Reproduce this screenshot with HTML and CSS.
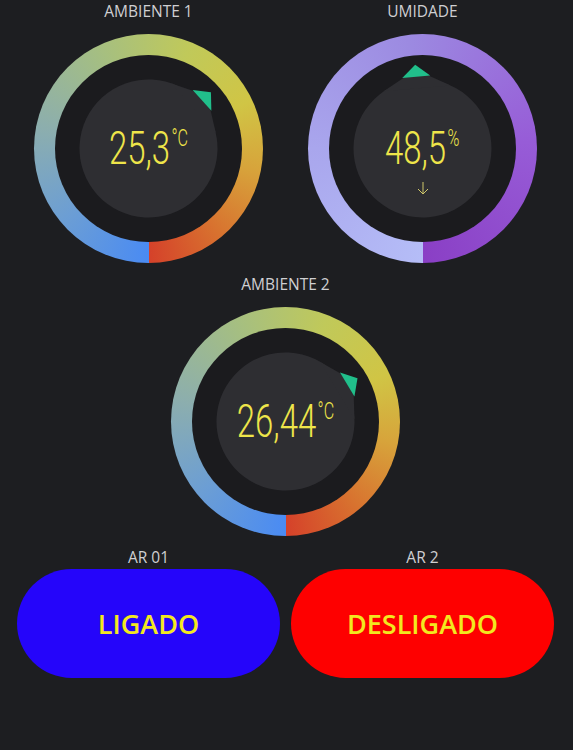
FILE: index.html
```html
<!DOCTYPE html>
<html lang="pt">
<head>
    <meta charset="utf-8">
    <meta name="viewport" content="width=device-width, initial-scale=1">
    <title>Painel</title>
    <link rel="stylesheet" href="styles.css">
</head>
<body>
    <main class="painel">
        <section class="linha duas">
            <div class="widget">
                <p class="rotulo">AMBIENTE 1</p>
                <div class="anel anel-temp">
                    <div class="poco">
                        <svg class="botao" viewBox="-93.5 -93.5 187 187">
                            <g transform="rotate(48)">
                                <circle r="69" />
                                <polygon class="corpo" points="0,-79 33.6,-60.3 -33.6,-60.3" />
                                <polygon class="seta" points="0,-84 14,-72 -14,-72" />
                            </g>
                        </svg>
                        <div class="leitura"><span class="valor">25,3</span><span class="unidade">°C</span></div>
                    </div>
                </div>
            </div>
            <div class="widget">
                <p class="rotulo">UMIDADE</p>
                <div class="anel anel-umid">
                    <div class="poco">
                        <svg class="botao" viewBox="-93.5 -93.5 187 187">
                            <g transform="rotate(-5)">
                                <circle r="69" />
                                <polygon class="corpo" points="0,-79 33.6,-60.3 -33.6,-60.3" />
                                <polygon class="seta" points="0,-84 14,-72 -14,-72" />
                            </g>
                        </svg>
                        <div class="leitura"><span class="valor">48,5</span><span class="unidade">%</span></div>
                        <svg class="tendencia" viewBox="0 0 12 13">
                            <path d="M6 0 V12 M1 7 L6 12 L11 7" />
                        </svg>
                    </div>
                </div>
            </div>
        </section>

        <section class="linha">
            <div class="widget">
                <p class="rotulo separado">AMBIENTE 2</p>
                <div class="anel anel-temp">
                    <div class="poco">
                        <svg class="botao" viewBox="-93.5 -93.5 187 187">
                            <g transform="rotate(59)">
                                <circle r="69" />
                                <polygon class="corpo" points="0,-79 33.6,-60.3 -33.6,-60.3" />
                                <polygon class="seta" points="0,-84 14,-72 -14,-72" />
                            </g>
                        </svg>
                        <div class="leitura"><span class="valor">26,44</span><span class="unidade">°C</span></div>
                    </div>
                </div>
            </div>
        </section>

        <section class="linha duas">
            <div class="widget">
                <p class="rotulo separado colado">AR 01</p>
                <button class="interruptor ligado">LIGADO</button>
            </div>
            <div class="widget">
                <p class="rotulo separado colado">AR 2</p>
                <button class="interruptor desligado">DESLIGADO</button>
            </div>
        </section>
    </main>
</body>
</html>
```

FILE: styles.css
```css
* { margin: 0; padding: 0; box-sizing: border-box; }
body {
    background: #1d1e21;
    font-family: "Open Sans", sans-serif;
}
.painel { padding: 0 19px 0 17px; }
.duas {
    display: grid;
    grid-template-columns: 1fr 1fr;
    column-gap: 11px;
}
.widget {
    display: flex;
    flex-direction: column;
    align-items: center;
}
.rotulo {
    font-size: 15.5px;
    line-height: 22px;
    color: #cfcfd2;
    margin-bottom: 12px;
}
.separado { margin-top: 10px; }
.colado { margin-bottom: 1px; }

.anel {
    width: 229px;
    height: 229px;
    border-radius: 50%;
    display: flex;
    align-items: center;
    justify-content: center;
}
.anel-temp {
    background: conic-gradient(from 180deg, #4a8bf3, #6c9ed4 14%, #8caeae 28%, #a6bf80 43%, #c0c95a 56%, #d0c545 68%, #d7a43b 78%, #d8722f 89%, #d5412a);
}
.anel-umid {
    background: conic-gradient(from 180deg, #b5bdf7, #a9a6ed 25%, #9c8ae1 48%, #975cd7 74%, #8a3fc5);
}
.poco {
    width: 187px;
    height: 187px;
    border-radius: 50%;
    background: #1b1b1e;
    position: relative;
    display: flex;
    align-items: center;
    justify-content: center;
}
.botao {
    position: absolute;
    inset: 0;
    width: 100%;
    height: 100%;
}
.botao circle, .botao .corpo { fill: #2e2e32; }
.botao .seta { fill: #21bf8b; }

.leitura {
    position: relative;
    display: flex;
    align-items: flex-start;
    color: #eee54a;
    font-family: Roboto, sans-serif;
    font-weight: 300;
    transform: translateY(-1px) scaleX(0.7);
}
.valor { font-size: 47px; line-height: 1; }
.unidade { font-size: 23px; line-height: 1; margin: 3px 0 0 2px; }

.tendencia {
    position: absolute;
    top: calc(50% + 33px);
    left: calc(50% - 6px);
    width: 12px;
    height: 13px;
    fill: none;
    stroke: #cfc76a;
    stroke-width: 1;
}

.interruptor {
    width: 100%;
    height: 109px;
    border: none;
    border-radius: 55px;
    display: flex;
    align-items: center;
    justify-content: center;
    font-family: "Open Sans", sans-serif;
    font-size: 27px;
    font-weight: 600;
    color: #f3e81f;
}
.ligado { background: #2505fa; }
.desligado { background: #fe0000; }
```
